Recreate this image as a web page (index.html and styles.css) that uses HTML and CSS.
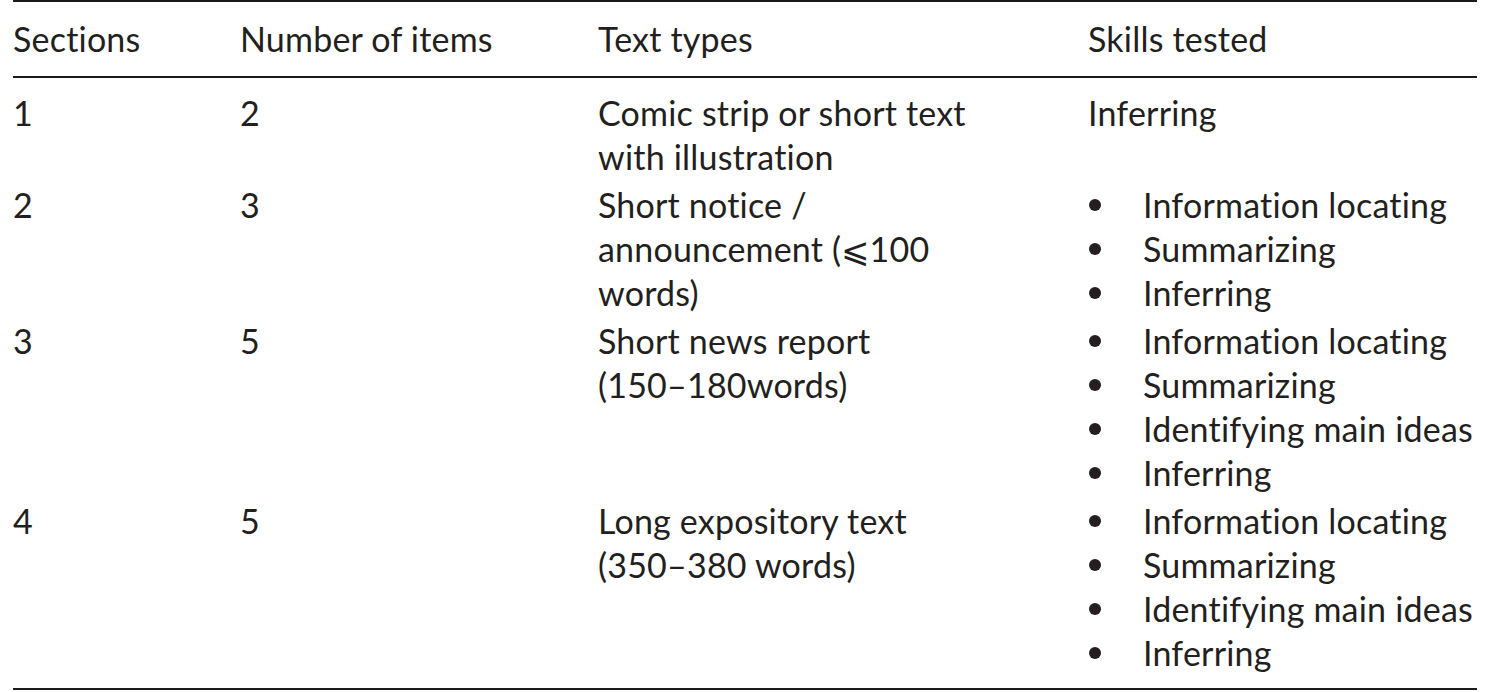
FILE: index.html
```html
<!DOCTYPE html>
<html lang="en">
<head>
<meta charset="utf-8">
<title>Reading test sections</title>
<link rel="stylesheet" href="styles.css">
</head>
<body>
<table class="spec">
  <colgroup>
    <col class="c1"><col class="c2"><col class="c3"><col class="c4">
  </colgroup>
  <thead>
    <tr><th>Sections</th><th>Number of items</th><th>Text types</th><th>Skills tested</th></tr>
  </thead>
  <tbody>
    <tr class="first">
      <td>1</td><td>2</td>
      <td>Comic strip or short text<br>with illustration</td>
      <td>Inferring</td>
    </tr>
    <tr>
      <td>2</td><td>3</td>
      <td>Short notice /<br>announcement (⩽100<br>words)</td>
      <td><ul class="skills"><li>Information locating</li><li>Summarizing</li><li>Inferring</li></ul></td>
    </tr>
    <tr>
      <td>3</td><td>5</td>
      <td>Short news report<br>(150–180words)</td>
      <td><ul class="skills"><li>Information locating</li><li>Summarizing</li><li>Identifying main ideas</li><li>Inferring</li></ul></td>
    </tr>
    <tr class="last">
      <td>4</td><td>5</td>
      <td>Long expository text<br>(350–380 words)</td>
      <td><ul class="skills"><li>Information locating</li><li>Summarizing</li><li>Identifying main ideas</li><li>Inferring</li></ul></td>
    </tr>
  </tbody>
</table>
</body>
</html>
```

FILE: styles.css
```css
html, body {
  margin: 0;
  padding: 0;
  background: #ffffff;
}
body {
  padding-left: 13px;
  font-family: "Lato", "Open Sans", "Liberation Sans", sans-serif;
  font-size: 34px;
  letter-spacing: 0.2px;
  line-height: 44px;
  color: #231f20;
}
.spec {
  width: 1464px;
  border-collapse: collapse;
  table-layout: fixed;
}
.c1 { width: 227px; }
.c2 { width: 358px; }
.c3 { width: 490px; }
.c4 { width: 389px; }
.spec th {
  font-weight: normal;
  text-align: left;
  padding: 15px 0 15px 0;
  border-top: 2px solid #1a1a1a;
  border-bottom: 2px solid #1a1a1a;
}
.spec td {
  text-align: left;
  vertical-align: top;
  padding: 2px 20px 2px 0;
  white-space: nowrap;
}
.spec td:last-child { padding-right: 0; }
.spec tr.first td { padding-top: 13px; }
.spec tr.last td {
  padding-bottom: 13px;
  border-bottom: 2px solid #1a1a1a;
}
.skills {
  list-style: none;
  margin: 0;
  padding: 0;
}
.skills li {
  display: flex;
  align-items: center;
}
.skills li::before {
  content: "";
  flex: none;
  width: 12px;
  height: 12px;
  border-radius: 50%;
  background: #231f20;
  margin: 0 42px 0 1px;
}
```
